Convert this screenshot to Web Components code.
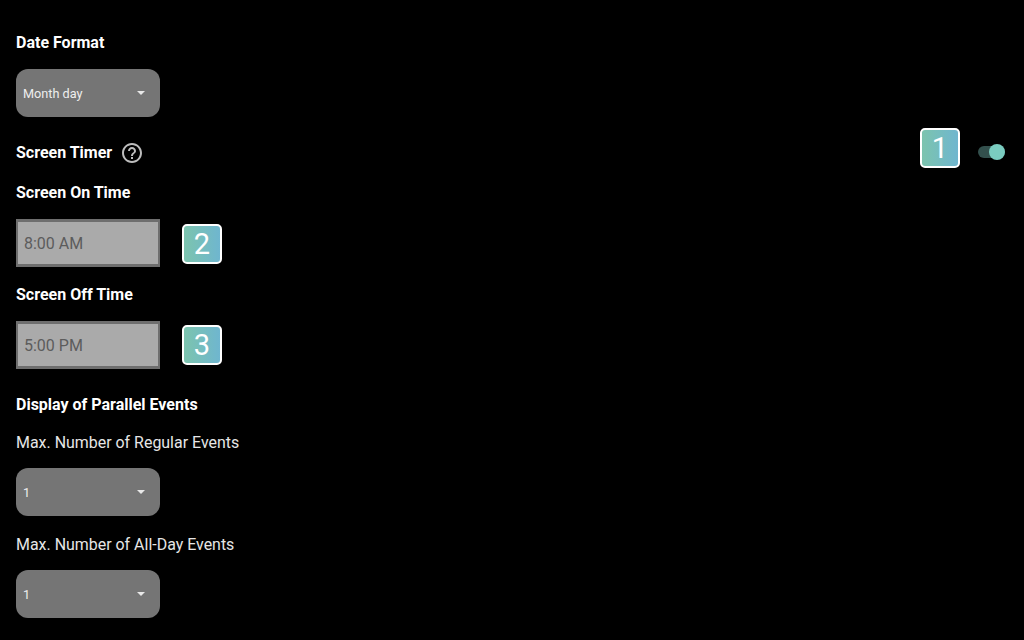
<!DOCTYPE html>
<html>
<head>
<meta charset="utf-8">
<style>
  html, body { margin: 0; height: 100%; background: #000; overflow: hidden; }
  body { font-family: Roboto, "Liberation Sans", sans-serif; color: #fff; }
  .timer { display: flex; align-items: center; height: 40px; margin-top: 15px; }
  .row { display: flex; align-items: center; gap: 22px; margin-top: 16px; }
  .timer step-badge { margin: -8px 0 0 auto; }
  .timer help-icon { margin-top: 2px; }
  .nudge { margin-top: 2px; }
</style>
</head>
<body>
<settings-page>
  <field-label strong style="--top:33px">Date Format</field-label>
  <drop-down style="--top:16px" value="Month day"></drop-down>

  <div class="timer">
    <field-label strong style="--top:2px">Screen Timer</field-label>
    <help-icon></help-icon>
    <step-badge n="1"></step-badge>
    <toggle-switch></toggle-switch>
  </div>

  <field-label strong style="--top:11px">Screen On Time</field-label>
  <div class="row">
    <time-input value="8:00 AM"></time-input>
    <step-badge class="nudge" n="2"></step-badge>
  </div>

  <field-label strong style="--top:18px">Screen Off Time</field-label>
  <div class="row">
    <time-input value="5:00 PM"></time-input>
    <step-badge n="3"></step-badge>
  </div>

  <field-label strong style="--top:26px">Display of Parallel Events</field-label>
  <field-label style="--top:18px">Max. Number of Regular Events</field-label>
  <drop-down style="--top:15px" value="1"></drop-down>
  <field-label style="--top:19px">Max. Number of All-Day Events</field-label>
  <drop-down style="--top:15px" value="1"></drop-down>
</settings-page>

<script>
class SettingsPage extends HTMLElement {
  constructor() {
    super();
    this.attachShadow({mode: 'open'}).innerHTML = `
      <style>
        :host { display: block; padding: 0 19px 0 16px; }
      </style>
      <slot></slot>`;
  }
}
customElements.define('settings-page', SettingsPage);

class FieldLabel extends HTMLElement {
  constructor() {
    super();
    this.attachShadow({mode: 'open'}).innerHTML = `
      <style>
        :host {
          display: block;
          margin-top: var(--top, 0);
          height: 20px;
          line-height: 20px;
          font-size: 15.94px;
          color: #e6e6e6;
          white-space: nowrap;
        }
        :host([strong]) { font-weight: 700; color: #fff; font-size: 16px; }
      </style>
      <slot></slot>`;
  }
}
customElements.define('field-label', FieldLabel);

class DropDown extends HTMLElement {
  constructor() {
    super();
    this.attachShadow({mode: 'open'}).innerHTML = `
      <style>
        :host {
          display: flex;
          align-items: center;
          justify-content: space-between;
          box-sizing: border-box;
          width: 144px;
          height: 48px;
          margin-top: var(--top, 0);
          padding: 0 15px 0 7px;
          border-radius: 12px;
          background: #757575;
          font-size: 12.7px;
          color: #eee;
        }
        i { width: 0; height: 0; border: 4px solid transparent; border-top: 4px solid #e8e8e8; border-bottom: 0; }
      </style>
      <span></span><i></i>`;
    this.shadowRoot.querySelector('span').textContent = this.getAttribute('value');
  }
}
customElements.define('drop-down', DropDown);

class TimeInput extends HTMLElement {
  constructor() {
    super();
    this.attachShadow({mode: 'open'}).innerHTML = `
      <style>
        :host {
          display: flex;
          align-items: center;
          box-sizing: border-box;
          width: 144px;
          height: 48px;
          padding-left: 6px;
          border: 2px solid #6e6e6e;
          border-width: 3px 2px;
          background: #aaa;
          font-size: 16px;
          color: #5c5c5c;
        }
      </style>
      <span></span>`;
    this.shadowRoot.querySelector('span').textContent = this.getAttribute('value');
  }
}
customElements.define('time-input', TimeInput);

class StepBadge extends HTMLElement {
  constructor() {
    super();
    this.attachShadow({mode: 'open'}).innerHTML = `
      <style>
        :host {
          display: flex;
          align-items: center;
          justify-content: center;
          box-sizing: border-box;
          width: 40px;
          height: 40px;
          border: 2px solid #fff;
          border-radius: 5px;
          background: linear-gradient(90deg, #7cc4ae, #6fb6cf);
          font-family: Roboto, "Liberation Sans", sans-serif;
          font-size: 29px;
          color: #fff;
        }
      </style>
      <span></span>`;
    this.shadowRoot.querySelector('span').textContent = this.getAttribute('n');
  }
}
customElements.define('step-badge', StepBadge);

class HelpIcon extends HTMLElement {
  constructor() {
    super();
    this.attachShadow({mode: 'open'}).innerHTML = `
      <style>
        :host { display: block; width: 24px; height: 24px; margin-left: 8px; }
        svg { display: block; }
      </style>
      <svg width="24" height="24" viewBox="0 0 24 24" fill="#bdbdbd">
        <path d="M11 18h2v-2h-2v2zm1-16C6.48 2 2 6.48 2 12s4.48 10 10 10 10-4.48 10-10S17.52 2 12 2zm0 18c-4.41 0-8-3.59-8-8s3.59-8 8-8 8 3.59 8 8-3.59 8-8 8zm0-14c-2.21 0-4 1.79-4 4h2c0-1.1.9-2 2-2s2 .9 2 2c0 2-3 1.75-3 5h2c0-2.25 3-2.5 3-5 0-2.21-1.79-4-4-4z"/>
      </svg>`;
  }
}
customElements.define('help-icon', HelpIcon);

class ToggleSwitch extends HTMLElement {
  constructor() {
    super();
    this.attachShadow({mode: 'open'}).innerHTML = `
      <style>
        :host { display: block; position: relative; width: 27px; height: 12px; margin-left: 18px; border-radius: 6px; background: #33504d; }
        b { position: absolute; right: 0; top: -2px; width: 16px; height: 16px; border-radius: 50%; background: #7accc0; }
      </style>
      <b></b>`;
  }
}
customElements.define('toggle-switch', ToggleSwitch);
</script>
</body>
</html>
